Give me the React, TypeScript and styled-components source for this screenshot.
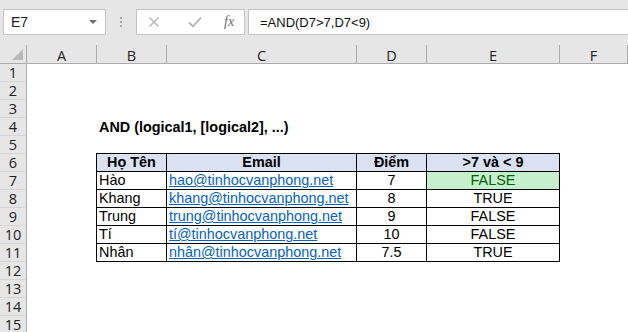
import React from "react";
import styled, { createGlobalStyle } from "styled-components";

const Global = createGlobalStyle`
  html, body { margin: 0; padding: 0; background: #ffffff; overflow: hidden; }
  body { font-family: "Liberation Sans", Arial, sans-serif; }
`;

const Page = styled.div`
  width: 628px;
  height: 332px;
  overflow: hidden;
  background: #ffffff;
`;

const TopBar = styled.div`
  height: 45px;
  background: #e6e6e6;
  display: flex;
  align-items: flex-start;
  padding-top: 9px;
  box-sizing: border-box;
`;

const NameBox = styled.div`
  margin-left: 3px;
  width: 103px;
  height: 26px;
  box-sizing: border-box;
  background: #fff;
  border: 1px solid #c6c6c6;
  display: flex;
  align-items: center;
  justify-content: space-between;
  padding: 0 8px 0 7px;
  font-size: 14px;
  color: #222;
`;

const DropArrow = styled.span`
  width: 0;
  height: 0;
  border-left: 4px solid transparent;
  border-right: 4px solid transparent;
  border-top: 4px solid #6d6d6d;
`;

const Dots = styled.div`
  width: 30px;
  height: 26px;
  display: flex;
  flex-direction: column;
  align-items: center;
  justify-content: center;
  gap: 2px;
  & > span {
    width: 2px;
    height: 2px;
    background: #a6a6a6;
  }
`;

const FxBox = styled.div`
  width: 109px;
  height: 26px;
  box-sizing: border-box;
  background: #fff;
  border: 1px solid #c6c6c6;
  display: flex;
  align-items: center;
  padding-left: 11px;
  gap: 18px;
`;

const FxText = styled.span`
  font-family: "Liberation Serif", "Times New Roman", serif;
  font-style: italic;
  font-size: 14px;
  color: #6b6b6b;
  margin-left: 4px;
`;

const FormulaInput = styled.div`
  flex: 1;
  margin-left: 3px;
  height: 26px;
  box-sizing: border-box;
  background: #fff;
  border: 1px solid #c6c6c6;
  border-right: none;
  display: flex;
  align-items: center;
  padding-left: 11px;
  font-size: 13px;
  color: #111;
`;

const Sheet = styled.div`
  display: grid;
  grid-template-columns: 27px 70px 70px 190px 70px 133px 1fr;
  grid-template-rows: 19px repeat(15, 18px);
  font-size: 14.4px;
`;

const Corner = styled.div`
  grid-column: 1;
  grid-row: 1;
  background: #e6e6e6;
  border-right: 1px solid #ababab;
  border-bottom: 1px solid #ababab;
  box-sizing: border-box;
  position: relative;
  &::after {
    content: "";
    position: absolute;
    right: 3px;
    bottom: 3px;
    width: 0;
    height: 0;
    border-left: 11px solid transparent;
    border-bottom: 11px solid #b9b9b9;
  }
`;

const ColHeader = styled.div<{ $col: number }>`
  grid-column: ${(p) => p.$col};
  grid-row: 1;
  background: #e6e6e6;
  border-right: 1px solid #ababab;
  border-bottom: 1px solid #ababab;
  box-sizing: border-box;
  display: flex;
  align-items: center;
  justify-content: center;
  font-family: "Open Sans", "Liberation Sans", sans-serif;
  font-size: 14.5px;
  color: #222;
  padding-top: 3px;
`;

const RowHeader = styled.div<{ $row: number }>`
  grid-column: 1;
  grid-row: ${(p) => p.$row};
  background: #e6e6e6;
  border-right: 1px solid #ababab;
  border-bottom: 1px solid #d4d4d4;
  box-sizing: border-box;
  display: flex;
  align-items: center;
  justify-content: center;
  font-family: "Open Sans", "Liberation Sans", sans-serif;
  font-size: 14.5px;
  color: #222;
`;

const Title = styled.div`
  grid-column: 3 / 6;
  grid-row: 5;
  padding-left: 2px;
  font-weight: bold;
  font-size: 14.4px;
  line-height: 18px;
  color: #000;
  white-space: nowrap;
`;

const Table = styled.div`
  grid-column: 3 / 7;
  grid-row: 7 / 13;
  margin-left: -1px;
  margin-top: -1px;
  display: grid;
  grid-template-columns: 70px 190px 70px 133px;
  grid-auto-rows: 18px;
  border-left: 1px solid #000;
  border-top: 1px solid #000;
`;

const Cell = styled.div<{ $head?: boolean; $align?: "left" | "center"; $good?: boolean }>`
  box-sizing: border-box;
  border-right: 1px solid #000;
  border-bottom: 1px solid #000;
  background: ${(p) => (p.$head ? "#d9e1f2" : p.$good ? "#c6efce" : "#fff")};
  color: ${(p) => (p.$good ? "#006100" : "#000")};
  font-weight: ${(p) => (p.$head ? "bold" : "normal")};
  text-align: ${(p) => p.$align ?? "left"};
  padding-left: ${(p) => (p.$align === "center" ? "0" : "2px")};
  font-size: 14.4px;
  line-height: 17px;
  white-space: nowrap;
  overflow: hidden;
`;

const Link = styled.span`
  color: #0563c1;
  text-decoration: underline;
  text-underline-offset: 1px;
`;

const rows = [
  { name: "Hào", email: "hao@tinhocvanphong.net", score: "7", result: "FALSE", good: true },
  { name: "Khang", email: "khang@tinhocvanphong.net", score: "8", result: "TRUE" },
  { name: "Trung", email: "trung@tinhocvanphong.net", score: "9", result: "FALSE" },
  { name: "Tí", email: "tí@tinhocvanphong.net", score: "10", result: "FALSE" },
  { name: "Nhân", email: "nhân@tinhocvanphong.net", score: "7.5", result: "TRUE" },
];

const cols = ["A", "B", "C", "D", "E", "F"];

export default function App() {
  return (
    <Page>
      <Global />
      <TopBar>
        <NameBox>
          <span>E7</span>
          <DropArrow />
        </NameBox>
        <Dots>
          <span />
          <span />
          <span />
        </Dots>
        <FxBox>
          <svg width="12" height="12" viewBox="0 0 12 12">
            <path d="M1.5 1.5 L10.5 10.5 M10.5 1.5 L1.5 10.5" stroke="#b3b3b3" strokeWidth="1.3" fill="none" />
          </svg>
          <svg width="14" height="12" viewBox="0 0 14 12" style={{ marginLeft: 10 }}>
            <path d="M1 6.5 L5 10.5 L13 1.5" stroke="#b3b3b3" strokeWidth="1.8" fill="none" />
          </svg>
          <FxText>fx</FxText>
        </FxBox>
        <FormulaInput>=AND(D7&gt;7,D7&lt;9)</FormulaInput>
      </TopBar>
      <Sheet>
        <Corner />
        {cols.map((c, i) => (
          <ColHeader key={c} $col={i + 2}>
            {c}
          </ColHeader>
        ))}
        {Array.from({ length: 15 }, (_, i) => (
          <RowHeader key={i} $row={i + 2}>
            {i + 1}
          </RowHeader>
        ))}
        <Title>AND (logical1, [logical2], ...)</Title>
        <Table>
          <Cell $head $align="center">Họ Tên</Cell>
          <Cell $head $align="center">Email</Cell>
          <Cell $head $align="center">Điểm</Cell>
          <Cell $head $align="center">&gt;7 và &lt; 9</Cell>
          {rows.map((r) => (
            <React.Fragment key={r.name}>
              <Cell>{r.name}</Cell>
              <Cell>
                <Link>{r.email}</Link>
              </Cell>
              <Cell $align="center">{r.score}</Cell>
              <Cell $align="center" $good={r.good}>
                {r.result}
              </Cell>
            </React.Fragment>
          ))}
        </Table>
      </Sheet>
    </Page>
  );
}
